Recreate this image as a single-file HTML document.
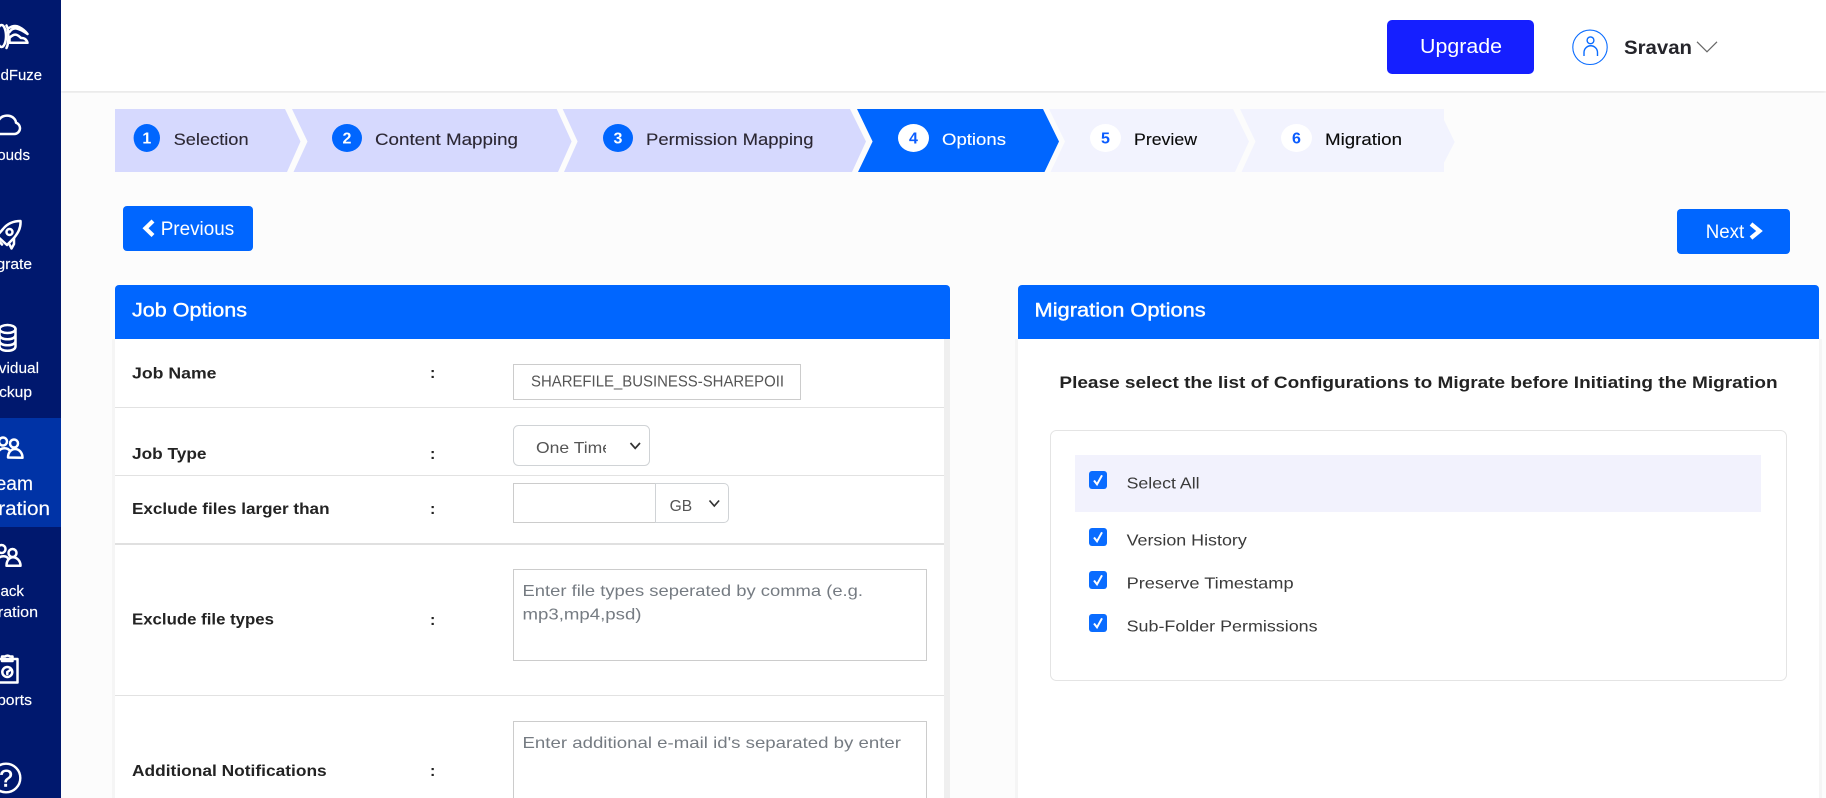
<!DOCTYPE html>
<html><head><meta charset="utf-8"><title>Options</title>
<style>
html,body{margin:0;padding:0;width:1826px;height:798px;overflow:hidden;background:#fcfcfc}
svg{display:block}
text{font-family:"Liberation Sans",sans-serif}
.s{fill:#fff;font-size:15px;stroke:#fff;stroke-width:.15px}
.st{font-size:17px;fill:#2b2733;stroke:#2b2733;stroke-width:.12px}
.n{font-size:16px;font-weight:bold;text-anchor:middle}
.l{font-size:16px;font-weight:bold;fill:#232323}
.o{font-size:16px;fill:#3a3a3a}
.ph{font-size:16px;fill:#757b82}
.h{font-size:19px;fill:#fff;stroke:#fff;stroke-width:.4px}
.ic{fill:none;stroke:#fff;stroke-width:2.5;stroke-linecap:round;stroke-linejoin:round}
</style></head><body>
<svg width="1826" height="798" viewBox="0 0 1826 798" xmlns="http://www.w3.org/2000/svg">
<defs>
<filter id="sh" x="-2%" y="-20%" width="104%" height="150%"><feGaussianBlur stdDeviation="2"/></filter>
<clipPath id="ct"><rect x="530" y="430" width="76" height="32"/></clipPath>
<clipPath id="cj"><rect x="525" y="368" width="259" height="28"/></clipPath>
</defs>
<rect width="1826" height="798" fill="#fcfcfc"/>

<!-- header -->
<rect x="61" y="89" width="1765" height="3" fill="#d8d8d8" filter="url(#sh)"/>
<rect x="61" y="0" width="1765" height="91" fill="#fff"/>
<rect x="1387" y="20" width="147" height="54" rx="5" fill="#151fff"/>
<text x="1420" y="53" fill="#fff" font-size="20" textLength="82" lengthAdjust="spacingAndGlyphs">Upgrade</text>
<circle cx="1590" cy="47.3" r="17.2" fill="none" stroke="#0a6cff" stroke-width="1.1"/>
<circle cx="1590.5" cy="40.3" r="3.4" fill="none" stroke="#0a6cff" stroke-width="1.4"/>
<path d="M1584 56v-3.500a6.600 6.600 0 0 1 13.500 0v3.500" fill="none" stroke="#0a6cff" stroke-width="1.4"/>
<text x="1624" y="54" font-size="19" font-weight="bold" fill="#25252b" textLength="68" lengthAdjust="spacingAndGlyphs">Sravan</text>
<path d="M1697 41.800l10 10 10-10" fill="none" stroke="#666" stroke-width="1.2"/>

<!-- stepper -->
<g fill="#d6d9fe">
<path d="M115 109H285L300.500 141.500 287 172H115Z"/>
<path d="M292 109H556.700L571.600 141.500 558 172H293.500L307.500 141.500Z"/>
<path d="M562.700 109H850L866 141.500 852 172H564L577.600 141.500Z"/>
</g>
<path d="M857 109H1043L1059 141.500 1044.500 172H858L872.600 141.500Z" fill="#0066ff"/>
<g fill="#f2f3fe">
<path d="M1049 109H1233L1249 141.500 1235 172H1050.500L1065 141.500Z"/>
<path d="M1240 109H1444V120L1454.700 142 1444 162.700V172H1241.500L1255.500 141.500Z"/>
</g>
<g fill="#0066ff">
<ellipse cx="146.800" cy="138" rx="13.200" ry="14"/>
<ellipse cx="347" cy="138" rx="15" ry="14"/>
<ellipse cx="618" cy="138" rx="15" ry="14"/>
</g>
<g fill="#fff">
<ellipse cx="913.500" cy="138" rx="15.500" ry="14"/>
<ellipse cx="1105.500" cy="138" rx="15.500" ry="14"/>
<ellipse cx="1296.500" cy="138" rx="15.500" ry="14"/>
</g>
<text class="n" x="146.800" y="143.500" fill="#fff">1</text>
<text class="n" x="347" y="143.500" fill="#fff">2</text>
<text class="n" x="618" y="143.500" fill="#fff">3</text>
<text class="n" x="913.500" y="143.500" fill="#0a5cff">4</text>
<text class="n" x="1105.500" y="143.500" fill="#0a5cff">5</text>
<text class="n" x="1296.500" y="143.500" fill="#0a5cff">6</text>
<text class="st" x="173.600" y="145" textLength="75" lengthAdjust="spacingAndGlyphs">Selection</text>
<text class="st" x="375" y="145" textLength="143" lengthAdjust="spacingAndGlyphs">Content Mapping</text>
<text class="st" x="646" y="145" textLength="167.500" lengthAdjust="spacingAndGlyphs">Permission Mapping</text>
<text class="st" x="942" y="145" style="fill:#fff;stroke:#fff" textLength="64" lengthAdjust="spacingAndGlyphs">Options</text>
<text class="st" x="1134" y="145" style="fill:#0a0a0a;stroke:#0a0a0a" textLength="63" lengthAdjust="spacingAndGlyphs">Preview</text>
<text class="st" x="1325" y="145" style="fill:#0a0a0a;stroke:#0a0a0a" textLength="77" lengthAdjust="spacingAndGlyphs">Migration</text>

<!-- nav buttons -->
<rect x="123" y="206" width="130" height="45" rx="4" fill="#0066ff"/>
<path d="M153 221L145.500 228.200 153 235.500" fill="none" stroke="#fff" stroke-width="4.200"/>
<text x="160.700" y="235" fill="#fff" font-size="19" textLength="73.500" lengthAdjust="spacingAndGlyphs">Previous</text>
<rect x="1677" y="209" width="113" height="45" rx="4" fill="#0066ff"/>
<text x="1705.700" y="238" fill="#fff" font-size="19" textLength="38.500" lengthAdjust="spacingAndGlyphs">Next</text>
<path d="M1751 224L1759.500 231 1751 238" fill="none" stroke="#fff" stroke-width="4.200"/>

<!-- job card -->
<rect x="944" y="339" width="6" height="459" fill="#efefef"/>
<rect x="112" y="339" width="3" height="459" fill="#f5f5f5"/>
<rect x="115" y="339" width="829" height="459" fill="#fff"/>
<path d="M115 339V289a4 4 0 0 1 4-4H946a4 4 0 0 1 4 4V339Z" fill="#0066ff"/>
<text class="h" x="132" y="316.500" textLength="115" lengthAdjust="spacingAndGlyphs">Job Options</text>
<rect x="115" y="407" width="829" height="1" fill="#e2e2e2"/>
<rect x="115" y="475" width="829" height="1" fill="#e2e2e2"/>
<rect x="115" y="543" width="829" height="2" fill="#e0e0e0"/>
<rect x="115" y="695" width="829" height="1" fill="#e2e2e2"/>

<text class="l" x="132" y="378.500" textLength="84.500" lengthAdjust="spacingAndGlyphs">Job Name</text>
<text class="l" x="132" y="459" textLength="74.500" lengthAdjust="spacingAndGlyphs">Job Type</text>
<text class="l" x="132" y="514" textLength="197.500" lengthAdjust="spacingAndGlyphs">Exclude files larger than</text>
<text class="l" x="132" y="624.700" textLength="142" lengthAdjust="spacingAndGlyphs">Exclude file types</text>
<text class="l" x="132" y="776" textLength="194.700" lengthAdjust="spacingAndGlyphs">Additional Notifications</text>
<text class="l" x="430" y="378">:</text>
<text class="l" x="430" y="459">:</text>
<text class="l" x="430" y="514">:</text>
<text class="l" x="430" y="625">:</text>
<text class="l" x="430" y="776">:</text>

<rect x="513.500" y="364.500" width="287" height="35" fill="#fff" stroke="#ccc"/>
<g clip-path="url(#cj)"><text x="531" y="386.700" font-size="15.500" fill="#555" textLength="253" lengthAdjust="spacingAndGlyphs">SHAREFILE_BUSINESS-SHAREPOII</text></g>

<rect x="513.500" y="425.500" width="136" height="40" rx="5" fill="#fff" stroke="#d0d3d6"/>
<g clip-path="url(#ct)"><text x="536" y="453" font-size="16" fill="#555" textLength="76" lengthAdjust="spacingAndGlyphs">One Time</text></g>
<path d="M630.500 443l4.700 5.300 4.800-5.300" fill="none" stroke="#333" stroke-width="1.700"/>

<rect x="513.500" y="483.500" width="142" height="39" fill="#fff" stroke="#ccc"/>
<path d="M655.500 483.500H724a4.500 4.500 0 0 1 4.500 4.500V518a4.500 4.500 0 0 1-4.500 4.500H655.500Z" fill="#fff" stroke="#d0d3d6"/>
<text x="669.600" y="511" font-size="16" fill="#555" textLength="22.500" lengthAdjust="spacingAndGlyphs">GB</text>
<path d="M709.500 500.500l4.800 5.500 4.800-5.500" fill="none" stroke="#333" stroke-width="1.700"/>

<rect x="513.500" y="569.500" width="413" height="91" fill="#fff" stroke="#ccc"/>
<text class="ph" x="522.500" y="596" textLength="340.500" lengthAdjust="spacingAndGlyphs">Enter file types seperated by comma (e.g.</text>
<text class="ph" x="522.500" y="619.300" textLength="119" lengthAdjust="spacingAndGlyphs">mp3,mp4,psd)</text>
<rect x="513.500" y="721.500" width="413" height="90" fill="#fff" stroke="#ccc"/>
<text class="ph" x="522.500" y="748" textLength="378.500" lengthAdjust="spacingAndGlyphs">Enter additional e-mail id's separated by enter</text>

<!-- migration card -->
<rect x="1015" y="339" width="807" height="459" fill="#f5f5f5"/>
<rect x="1018" y="339" width="801" height="459" fill="#fff"/>
<path d="M1018 339V289a4 4 0 0 1 4-4H1815a4 4 0 0 1 4 4V339Z" fill="#0066ff"/>
<text class="h" x="1034.500" y="316.500" textLength="171.200" lengthAdjust="spacingAndGlyphs">Migration Options</text>
<text x="1059.400" y="388" font-size="17" font-weight="bold" fill="#232323" textLength="718.200" lengthAdjust="spacingAndGlyphs">Please select the list of Configurations to Migrate before Initiating the Migration</text>
<rect x="1050.500" y="430.500" width="736" height="250" rx="6" fill="#fff" stroke="#e4e4e4"/>
<rect x="1075" y="455" width="686" height="57" fill="#f2f2fd"/>
<g>
<rect x="1089" y="471" width="18" height="18" rx="3" fill="#0a6cff"/>
<path d="M1094 480.500l3 3.800 5-9" fill="none" stroke="#fff" stroke-width="2"/>
<rect x="1089" y="528" width="18" height="18" rx="3" fill="#0a6cff"/>
<path d="M1094 537.500l3 3.800 5-9" fill="none" stroke="#fff" stroke-width="2"/>
<rect x="1089" y="571" width="18" height="18" rx="3" fill="#0a6cff"/>
<path d="M1094 580.500l3 3.800 5-9" fill="none" stroke="#fff" stroke-width="2"/>
<rect x="1089" y="614" width="18" height="18" rx="3" fill="#0a6cff"/>
<path d="M1094 623.500l3 3.800 5-9" fill="none" stroke="#fff" stroke-width="2"/>
</g>
<text class="o" x="1126.600" y="488.300" textLength="73" lengthAdjust="spacingAndGlyphs">Select All</text>
<text class="o" x="1126.600" y="545.300" textLength="120.200" lengthAdjust="spacingAndGlyphs">Version History</text>
<text class="o" x="1126.600" y="588.300" textLength="167" lengthAdjust="spacingAndGlyphs">Preserve Timestamp</text>
<text class="o" x="1126.600" y="631.300" textLength="191" lengthAdjust="spacingAndGlyphs">Sub-Folder Permissions</text>

<!-- sidebar -->
<rect x="0" y="0" width="61" height="798" fill="#00186e"/>
<rect x="0" y="418" width="61" height="109" fill="#0033a6"/>

<!-- logo -->
<g class="ic" stroke-width="2">
<ellipse cx="1.500" cy="36" rx="4.500" ry="11"/>
<path d="M6.500 25.500c2.500 4 2.500 18 0 22.500"/>
<path d="M9 28c4-2.500 7-2.500 10-1 3 1.500 6 3.500 8.500 7-5-3.500-8-5-11-5.500-2.500-.4-5 .5-7 3.500"/>
<path d="M9.500 42.800V38c2-2.500 5-4 7.500-3 2 .8 3 2 4 3 2.500-.3 5.500 1 6.500 4.800Z"/>
</g>
<!-- cloud -->
<path class="ic" d="M-2 134H14.500a5.800 5.800 0 0 0 1.500-11.300 9 7.500 0 0 0-17-3"/>
<!-- rocket -->
<g class="ic">
<path d="M20.500 221C13 221 7 224 3 229L-3 236 7 245 14 238C18 233 21 228 20.500 221Z"/>
<circle cx="9.500" cy="232" r="3"/>
<path d="M14 238V244L11.500 248.500 9 243.500M-1 241l3 3.500"/>
</g>
<!-- db -->
<g class="ic">
<ellipse cx="7.500" cy="329" rx="8" ry="4"/>
<path d="M-.5 329v17.500c0 2.500 3.500 4.300 8 4.300s8-1.800 8-4.300V329M-.5 335c0 2.500 3.500 4.300 8 4.300s8-1.800 8-4.300M-.5 341c0 2.500 3.500 4.300 8 4.300s8-1.800 8-4.300"/>
</g>
<!-- team people -->
<g class="ic">
<circle cx="3" cy="441.500" r="4"/>
<circle cx="14" cy="443.500" r="4"/>
<path d="M-3 457.700c0-6 3-9.500 7.500-9.500 2.500 0 4.500 1 5.500 3M8 457.500c0-5 3-8.500 7-8.500s7.500 3.500 7.500 8.700Z"/>
</g>
<!-- slack people -->
<g class="ic">
<circle cx="1.500" cy="549" r="4"/>
<circle cx="12.500" cy="553" r="4"/>
<path d="M-4 565.700c0-6 3-9.500 7.500-9.500 2 0 3.500.7 4.500 2M6.500 565.700c0-5 2.800-8.500 6.500-8.500s7.500 3.500 7.500 8.500Z"/>
</g>
<!-- reports -->
<g class="ic">
<path d="M-2 659H17.500V682.500H-2"/>
<path d="M2 659v-2.500h3a3 2 0 0 1 5 0h2.500v4.500H2Z"/>
<circle cx="7.300" cy="672" r="5"/>
<path d="M7.300 672l3-2M7.300 672v2"/>
</g>
<!-- help -->
<circle cx="6" cy="778" r="14.300" fill="none" stroke="#fff" stroke-width="2.400"/>
<text x="6" y="786.500" fill="#fff" stroke="#fff" stroke-width=".6" font-size="24" text-anchor="middle">?</text>

<text class="s" x="-30" y="80" textLength="72" lengthAdjust="spacingAndGlyphs">CloudFuze</text>
<text class="s" x="-17" y="160" textLength="47" lengthAdjust="spacingAndGlyphs">Clouds</text>
<text class="s" x="-20" y="269" textLength="52" lengthAdjust="spacingAndGlyphs">Migrate</text>
<text class="s" x="-26" y="373" textLength="65" lengthAdjust="spacingAndGlyphs">Individual</text>
<text class="s" x="-20" y="397" textLength="52" lengthAdjust="spacingAndGlyphs">Backup</text>
<text class="s" x="-14" y="490" style="font-size:19px" textLength="47" lengthAdjust="spacingAndGlyphs">Team</text>
<text class="s" x="-35" y="515" style="font-size:19px" textLength="85" lengthAdjust="spacingAndGlyphs">Migration</text>
<text class="s" x="-13" y="596" textLength="37" lengthAdjust="spacingAndGlyphs">Slack</text>
<text class="s" x="-28" y="617" textLength="66" lengthAdjust="spacingAndGlyphs">Migration</text>
<text class="s" x="-23" y="705" textLength="55" lengthAdjust="spacingAndGlyphs">Reports</text>
</svg>
</body></html>
